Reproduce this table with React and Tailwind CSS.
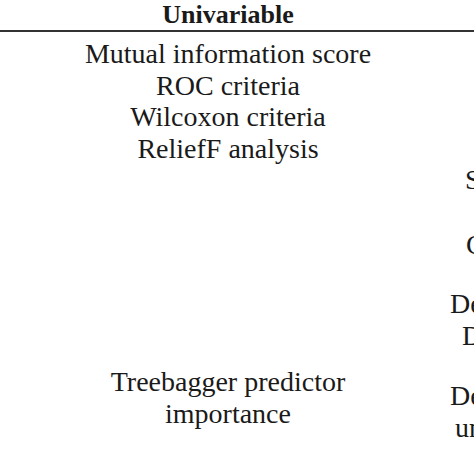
export default function App() {
  return (
    <div
      className="w-[474px] h-[474px] overflow-hidden bg-white text-[#1a1a1a]"
      style={{ fontFamily: '"Liberation Serif", "Times New Roman", serif' }}
    >
      <div className="w-[720px]">
        <div className="grid grid-cols-[456px_264px] h-[32px] border-b-[2px] border-[#333]">
          <div className="text-center font-bold text-[26px] leading-[30px]">Univariable</div>
          <div />
        </div>

        <div className="grid grid-cols-[456px_264px] text-[28px] leading-[31.5px] whitespace-nowrap">
          <div className="flex flex-col items-center pt-[6px]">
            <p>Mutual information score</p>
            <p>ROC criteria</p>
            <p>Wilcoxon criteria</p>
            <p>ReliefF analysis</p>
            <p className="mt-[202px]">Treebagger predictor</p>
            <p>importance</p>
          </div>

          <div className="flex flex-col pt-[132px]">
            <p className="ml-[9px]">Sequential</p>
            <p className="ml-[10px] mt-[33px]">Chi-square</p>
            <p className="ml-[-6px] mt-[28px]">Decision tree</p>
            <p className="ml-[6px]">Dimension</p>
            <p className="ml-[-6px] mt-[29px]">Decision tree</p>
            <p className="ml-[-1px]">unsupervised</p>
          </div>
        </div>
      </div>
    </div>
  );
}
